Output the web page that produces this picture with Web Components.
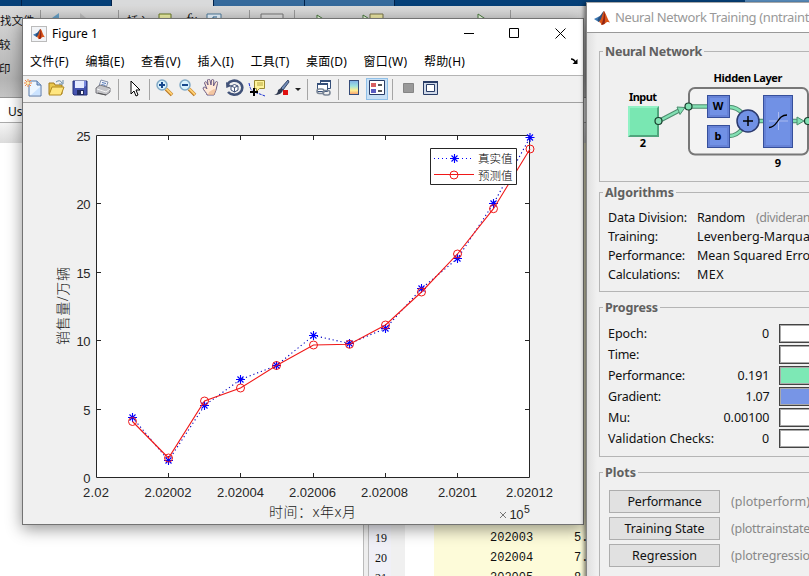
<!DOCTYPE html>
<html lang="zh"><head><meta charset="utf-8"><title>Figure 1</title>
<style>html,body{margin:0;width:809px;height:576px;overflow:hidden;background:#fff}</style></head>
<body><desk-top></desk-top>
<script>
const UI = '"Noto Sans","Noto Sans CJK SC",sans-serif';
function define(name, html, init) {
  const t = document.createElement('template');
  t.innerHTML = html;
  customElements.define(name, class extends HTMLElement {
    connectedCallback() {
      if (this.shadowRoot) return;
      this.attachShadow({mode: 'open'}).appendChild(t.content.cloneNode(true));
      if (init) init(this);
    }
  });
}

/* Label whose letter spacing is adjusted to fill the width in its w attribute */
define('fit-label', `<style>:host{display:inline-block;white-space:nowrap;flex:none}span{display:inline-block;white-space:pre}</style><span><slot></slot></span>`, el => {
  const w = +el.getAttribute('w'), s = el.shadowRoot.querySelector('span');
  const natural = s.getBoundingClientRect().width;
  if (w && natural) {
    s.style.letterSpacing = (w - natural) / el.textContent.length + 'px';
    el.style.width = w + 'px';
  }
});

define('matlab-logo', `<style>:host{display:block;flex:none}svg{display:block}</style>
<svg width="16" height="14" viewBox="0 0 16 14"><path d="M0 8 5 5.6 8 8 4.6 11z" fill="#3c79b4"/><path d="M5 5.6C7 5 8 1 10 0L8.7 8 4.6 11 3.5 9z" fill="#28507f"/><path d="M10 0c2 2 3.200 8 6 11.500-2-1-3.500-.8-5.500 1.500L7.500 14C7 12 6 11 4.600 11 7.500 9.500 8 3 10 0z" fill="#d95318"/><path d="M10 0c1.200 3 1.500 8 .5 13L7.500 14C9 10 10 5 10 0z" fill="#8e2413"/></svg>`);

const ICON = {
 new: '<path d="M5 3h8l4 4v11H5z" fill="#edf6ff" stroke="#5577a8"/><path d="M13 3v4h4" fill="#a9c5e8" stroke="#5577a8"/><path d="M7 17h9V9z" fill="#bcdcff" opacity=".7"/><path d="M4 1v8M0 5h8M1 2l6 6M7 2 1 8" stroke="#ef8844"/><circle cx="4" cy="5" r="1.500" fill="#fff3b0"/>',
 open: '<path d="M3 16V5h5l1 2h7v9z" fill="#eac84f" stroke="#a37b1c"/><path d="M3 17 6 9h12l-3 8z" fill="#ffe680" stroke="#b28a20"/><path d="M10 4q4-3 6 1m1-3v4h-4" fill="none" stroke="#668aa7"/>',
 save: '<path d="M3 3h14v14H4l-1-1z" fill="#4654b0" stroke="#26337d"/><path d="M5 3h9v7H5z" fill="#e6ebff"/><path d="M7 12h7v5H7z" fill="#202b5e"/><path d="M11 13h2v3h-2z" fill="#f6f6ff"/><path d="M14 3v6l2-1V3z" fill="#7b8ae0"/>',
 print: '<path d="M6 8 8 2l7 2-2 6z" fill="#f2f4fa" stroke="#8490aa"/><path d="m9 4.500 4 1m-4.500 1 4 1" stroke="#5277b7"/><path d="m3 10 4-3 10 3v4l-4 3-10-2z" fill="#c4c4c8" stroke="#77777d"/><path d="m4 11 9 3 4-3" fill="none" stroke="#f4f4f4"/><path d="m5 15 8 2" stroke="#555"/>',
 arrow: '<path d="M6 3v13l3-3 2 5 2-1-2-5h4z" fill="#fff" stroke="#000"/>',
 zin: '<path d="m11 11 6 6" stroke="#b87620" stroke-width="3.500"/><path d="m11 10.500 6 6" stroke="#ffcf72" stroke-width="2"/><circle cx="7" cy="7" r="5" fill="#d9f1fc" stroke="#80a9c6" stroke-width="1.500"/><path d="M4 7h6M7 4v6" stroke="#17488d" stroke-width="2"/>',
 zout: '<path d="m11 11 6 6" stroke="#b87620" stroke-width="3.500"/><path d="m11 10.500 6 6" stroke="#ffcf72" stroke-width="2"/><circle cx="7" cy="7" r="5" fill="#d9f1fc" stroke="#80a9c6" stroke-width="1.500"/><path d="M4 7h6" stroke="#17488d" stroke-width="2"/>',
 hand: '<path d="M6 17c0-2-4-5-4-7 1-2 3 0 4 1L3.500 5c.5-2 2-1.500 2.500 0l1 2-.5-5c1-1.500 2-1 2.500.3L10 7l.5-5c1-1.500 2.300-.5 2.300 1L12.500 8l2-4c1.500-1.200 2.400 0 2 1.500L15 12l-2 5z" fill="#ffe8d5" stroke="#6b5a83"/><path d="m7 17 1-3 5-3 2 1-2 5z" fill="#eeb88b" opacity=".7"/>',
 rot: '<path d="M3.500 6A8 7 0 1 1 4 14" fill="none" stroke="#415278" stroke-width="2.600"/><path d="m2 4 .3 6 5.200-2z" fill="#415278"/><path d="m7 8 3.500-1.500L14 8v4l-3.500 2L7 12zM7 8l3.500 1.500L14 8m-3.500 1.500V14" fill="#fff" stroke="#415278"/>',
 tip: '<path d="M7.500 2.500h10v8h-5l-3 3v-3h-2z" fill="#fff49b" stroke="#9a8a35"/><path d="M10 5h6m-6 2h6" stroke="#b6a643"/><path d="M2 5c1 5 2 8 5 9s6 2 11 4" fill="none" stroke="#1930d0" stroke-dasharray="3 1"/><path d="M7 10v8m-4-4h8" stroke="#000" stroke-width="2"/>',
 brush: '<path d="m17 2-7 8 2 2 6-8z" fill="#728db8" stroke="#354769"/><path d="m10 10 2 2q-1 5-9 5 4-1 4-5z" fill="#303a50"/><path d="M12 12h5v5h-5z" fill="#e01010"/>',
 link: '<path d="M7.500 2.500h10v8h-10z" fill="#f7faff" stroke="#344e78"/><path d="M7 3h11" stroke="#344e78" stroke-width="2"/><path d="M4.500 5.500h10v8h-10z" fill="#fff" stroke="#344e78"/><path d="M4 6h11" stroke="#344e78" stroke-width="2"/><g fill="none" stroke="#7b8797" stroke-width="1.600"><rect x="4" y="11" width="7" height="4.500" rx="2.200"/><rect x="10" y="12.500" width="7" height="4.500" rx="2.200"/></g>',
 bar: '<defs><linearGradient id="g" x2="0" y2="1"><stop stop-color="#7caee8"/><stop offset=".4" stop-color="#9ee3dd"/><stop offset=".7" stop-color="#ffef91"/><stop offset="1" stop-color="#f79b6c"/></linearGradient></defs><rect x="5.500" y="2.500" width="9" height="14" fill="url(#g)" stroke="#354b78"/>',
 leg: '<path d="M2.500 2.500h15v14h-15z" fill="#fff" stroke="#293d67"/><path d="M4 5h5v4H4z" fill="#d75f62"/><path d="M4 11h5v4H4z" fill="#5a5cc1"/><path d="M11 7h4m-4 6h4" stroke="#222" stroke-width="1.400"/>',
 grey: '<path d="M5.500 5.500h10v9h-10z" fill="#999" stroke="#858585"/>',
 dock: '<path d="M3.500 4.500h14v12h-14z" fill="#d1dae9" stroke="#293d67"/><path d="M3 4h15" stroke="#293d67" stroke-width="2"/><path d="M6.500 6.500h8v7h-8z" fill="#fff" stroke="#293d67"/>'
};
define('tool-icon', `<style>:host{display:block;flex:none;width:20px;height:20px}:host([on]){background:#c8e0f5;box-shadow:0 0 0 1px #90c0e8}svg{display:block}</style><svg width="20" height="20" viewBox="0 1 20 20"></svg>`,
 el => el.shadowRoot.querySelector('svg').innerHTML = ICON[el.getAttribute('k')]);

define('tool-bar', `<style>:host{display:flex;flex:none;align-items:center;background:#f0f0f0;border-top:1px solid #b4b4b4;border-bottom:1px solid #a0a0a0;box-sizing:border-box;height:28px}
i{width:1px;height:21px;background:#a5a5a5;flex:none}b{width:0;height:0;border:3px solid transparent;border-top-color:#222;border-bottom:0;margin:0 1px}</style>`, el => {
  const seq = 'new1 open2 save4 print3 |5 arrow6 |4 zin5 zout3 hand3 rot3 tip3 brush4 v3 |5 link5 |5 bar5 leg3 |5 grey5 dock2'.split(' ');
  for (const s of seq) {
    const k = s.slice(0, -1);
    const n = document.createElement(k === '|' ? 'i' : k === 'v' ? 'b' : 'tool-icon');
    if (k.length > 1) n.setAttribute('k', k);
    if (k === 'leg') n.setAttribute('on', '');
    n.style.marginLeft = (+s.slice(-1) + (k === 'v' ? 1 : 0)) + 'px';
    el.shadowRoot.appendChild(n);
  }
});

define('line-chart', `<style>:host{display:block;width:560px;height:421px;flex:none}svg{display:block}
text{font-family:"Liberation Sans","Noto Sans CJK SC",sans-serif;font-size:13px;fill:#262626}.c{font-family:"Noto Sans","Noto Sans CJK SC",sans-serif;fill:#222;font-weight:300;font-size:14px}.l{font-size:11.5px;fill:#000}</style>
<svg width="560" height="421" viewBox="23 103 560 421"></svg>`, el => {
  const xs = [132.5,168.5,204.5,240.5,276.5,313.5,349.5,385.5,421.5,457.5,493.5,530];
  const blue = [417.5,460.5,405.5,379.5,365.5,335.5,343.5,328.5,288.5,258.5,203.5,137.5];
  const red = [421.5,458,401,388,365.5,345,344.3,325,292,254,208.7,149];
  let o = '<path d="M96.5 135.5H529.5V477.5H96.5z" fill="#fff" stroke="#262626"/>';
  const t = (x, y, s, w, a = 'middle', c = '') => `<text class="${c}" x="${x}" y="${y}" text-anchor="${a}" textLength="${w}">${s}</text>`;
  [[96,'2.02',26],[168,'2.02002',47],[240.5,'2.02004',47],[312.5,'2.02006',47],[384.5,'2.02008',47],[457.5,'2.0201',39],[529.5,'2.02012',47]].forEach(([x,s,w], i) => {
    o += t(x, 497, s, w);
    const p = 96.5 + Math.round(i * 72.17);
    o += `<path d="M${p} 477v-4M${p} 136v4" stroke="#262626"/>`;
  });
  [0,5,10,15,20,25].forEach(v => {
    const p = Math.round(477 - v * 13.68) + .5;
    o += t(90.5, p + 5.5, v, v > 9 ? 14 : 7, 'end') + `<path d="M97 ${p}h4M529 ${p}h-4" stroke="#262626"/>`;
  });
  const pts = a => a.map((y, i) => xs[i] + ',' + y).join(' ');
  const star = (x, y) => `<path d="M${x-4.5} ${y}h9M${x} ${y-4.5}v9M${x-3} ${y-3}l6 6M${x+3} ${y-3}l-6 6" stroke="#00f" stroke-width="1.1"/>`;
  const ring = (x, y) => `<circle cx="${x}" cy="${y}" r="4" fill="none" stroke="#f01818"/>`;
  o += `<polyline points="${pts(blue)}" fill="none" stroke="#0000c0" stroke-width="1.1" stroke-dasharray="1.2 2.8"/>` + blue.map((y, i) => star(xs[i], y)).join('');
  o += `<polyline points="${pts(red)}" fill="none" stroke="#f01818" stroke-width="1.1"/>` + red.map((y, i) => ring(xs[i], y)).join('');
  o += '<path d="M430.5 148.5h86v36h-86z" fill="#fff" stroke="#262626"/><path d="M434 158.500h38" stroke="#00f" stroke-dasharray="1 3"/><path d="M434 174.500h40" stroke="#f01818"/>' + star(454.5, 158.5) + ring(454, 175);
  o += t(478, 163, '真实值', 34.5, 'start', 'c l') + t(478, 180, '预测值', 34.5, 'start', 'c l');
  o += t(269, 516.5, '时间：x年x月', 87, 'start', 'c') + `<g transform="translate(67.5 345) rotate(-90)">${t(0, 0, '销售量/万辆', 78, 'start', 'c')}</g>`;
  o += '<path d="m500 512 6 6m0-6-6 6" stroke="#555" stroke-width=".8"/>' + t(509.5, 519, '10', 14, 'start') + '<text x="524" y="513" style="font-size:10.5px">5</text>';
  el.shadowRoot.querySelector('svg').innerHTML = o;
});

define('figure-window', `<style>:host{display:flex;flex-direction:column;box-sizing:border-box;width:562px;height:507px;border:1px solid #737373;background:#f0f0f0;box-shadow:0 4px 15px rgba(0,0,0,.42);font:12px ${UI};color:#000}
header{display:flex;align-items:center;height:29px;background:#fff;padding-left:8px;flex:none}
.lg{width:14px;height:14px;border:1px solid #bbb;background:#f2f4f7;display:flex;align-items:center;justify-content:center;margin-right:5px;overflow:hidden}.lg matlab-logo{transform:scale(.75)}
.w{margin-left:auto;display:flex;margin-right:17px;gap:35px}.w svg{display:block}
nav{display:flex;align-items:center;background:#fff;height:27px;padding-left:7px;flex:none;line-height:18px}nav fit-label{margin-right:16.500px}nav svg{margin-left:auto;margin-right:4px}</style>
<header><div class="lg"><matlab-logo></matlab-logo></div><fit-label w="46">Figure 1</fit-label>
<div class="w"><svg width="11" height="11"><path d="M1 5.500h10" stroke="#000"/></svg><svg width="11" height="11"><path d="M.5.5h9v9H.5z" fill="none" stroke="#000"/></svg><svg width="11" height="11"><path d="m.5.500 10 10m0-10-10 10" stroke="#000"/></svg></div></header>
<nav><fit-label w="39">文件(F)</fit-label><fit-label w="39">编辑(E)</fit-label><fit-label w="40">查看(V)</fit-label><fit-label w="36.5">插入(I)</fit-label><fit-label w="39">工具(T)</fit-label><fit-label w="41">桌面(D)</fit-label><fit-label w="44">窗口(W)</fit-label><fit-label w="41">帮助(H)</fit-label><svg width="9" height="7"><path d="M1 1q3 0 5 4" fill="none" stroke="#000" stroke-width="1.500"/><path d="M7.500 1v5h-5z"/></svg></nav>
<tool-bar></tool-bar><line-chart></line-chart>`);

define('nn-group', `<style>:host{display:block;box-sizing:border-box;border:1px solid #b5b5b5;width:240px;flex:none}
.t{width:fit-content;height:17px;line-height:18px;margin:-9px 0 0 3px;padding:0 2px;background:#f0f0f0;color:#606060;font-weight:bold}</style><div class="t"><slot name="title"></slot></div><slot></slot>`);

define('nn-diagram', `<style>:host{display:block}svg{display:block}text{font:bold 11px "Noto Sans",sans-serif;text-anchor:middle;fill:#000}</style>
<svg width="209" height="120" viewBox="600 60 209 120">
<rect x="689" y="88" width="119" height="66.500" rx="6" fill="#f3f3f3" stroke="#777" stroke-width="2"/>
<g fill="none" stroke="#4e8d70" stroke-width="4.500"><path d="M659 121 681 109.500M690 106.500h18M729 107q8 0 14 7M729 136q8 0 14-8M758 121h6M792 121h6"/></g>
<g fill="none" stroke="#82e0b3" stroke-width="2.500"><path d="M659 121 681 109.500M690 106.500h18M729 107q8 0 14 7M729 136q8 0 14-8M758 121h6M792 121h6"/></g>
<path d="m677 107 8 .5-5 7z" fill="#82e0b3" stroke="#4e8d70"/><path d="m797 117 7 4-7 4z" fill="#82e0b3" stroke="#4e8d70"/>
<rect x="628" y="106" width="31" height="31" fill="#4fa57d"/><path d="M628 106h31l-3 3h-25v25l-3 3z" fill="#91f2c5"/><rect x="630" y="108" width="27" height="27" fill="#79e7b2"/>
<g stroke="#364f9b"><rect x="707.500" y="95.500" width="22" height="22" fill="#6682d6"/><rect x="707.500" y="125.500" width="22" height="22" fill="#6682d6"/><rect x="763.500" y="95.500" width="29" height="52" fill="#6682d6"/></g>
<g fill="#7191e5"><path d="M710 98h17v17h-17zM710 128h17v17h-17zM766 98h24v47h-24z"/></g>
<circle cx="748" cy="121" r="11" fill="#7191e5" stroke="#2c3a6d" stroke-width="1.500"/><path d="M743 121h10M748 116v10" stroke="#000" stroke-width="1.500"/>
<path d="M778.500 112v18M769 121h19" stroke="#a9baf0"/><path d="M769 127.500c9 0 8-12.500 18-12.500" fill="none" stroke="#000" stroke-width="1.300"/>
<g fill="#82e0b3" stroke="#173e2c" stroke-width="1.200"><circle cx="658.500" cy="121" r="3.500"/><circle cx="688.500" cy="106.500" r="3.500"/><circle cx="808" cy="121" r="3.500"/></g>
<text x="643" y="101" textLength="28">Input</text><text x="748" y="82" textLength="69">Hidden Layer</text><text x="643" y="147">2</text><text x="778" y="167">9</text><text x="718" y="110">W</text><text x="718" y="140">b</text></svg>`);

define('nn-bar', `<style>:host{display:block;box-sizing:border-box;width:60px;height:19px;border:1px solid #444;box-shadow:inset 1px 1px #aaa,inset 0 -1px #aaa;background:var(--c,#fff)}</style>`);
define('nn-button', `<style>:host{display:flex;justify-content:center;align-items:center;box-sizing:border-box;width:111px;height:23px;background:#e1e1e1;border:1px solid #adadad;flex:none}</style><slot></slot>`);

define('training-window', `<style>:host{display:block;width:240px;height:580px;border-left:1px solid #858585;border-top:1px solid #aaa;background:linear-gradient(90deg,#e0e0e0,#f0f0f0 10px);font:12.500px ${UI};color:#111;box-shadow:-2px 1px 4px rgba(0,0,0,.5)}
header{display:flex;align-items:center;height:29px;background:#fff;border-bottom:1px solid #999;color:#999;font-size:13px;padding-left:7px;gap:5px;line-height:16px}
header fit-label{margin-top:-2px}
main{display:flex;flex-direction:column;padding:18px 0 0 12px}
.r{display:flex;height:19px;align-items:center;padding-left:8px}.r>:first-child{margin-right:auto}.a .r{display:grid;grid-template-columns:89px auto;justify-content:start}.a .r>:first-child{margin:0}
.p .r{height:21px;padding-right:0;width:231px;box-sizing:border-box}.p .r nn-bar{margin-left:9.500px;width:52px}.g{color:#888}
.b{display:flex;align-items:center;gap:11px;padding-left:9px;margin-bottom:4px}</style>
<header><matlab-logo></matlab-logo><fit-label w="194">Neural Network Training (nntraint</fit-label></header>
<main>
<nn-group style="height:131px;margin-bottom:10px"><fit-label slot="title" w="97">Neural Network</fit-label><nn-diagram></nn-diagram></nn-group>
<nn-group style="height:100px;margin-bottom:15px"><fit-label slot="title" w="69">Algorithms</fit-label><div class="a" style="padding-top:7px">
<div class="r"><fit-label w="79">Data Division:</fit-label><div><fit-label w="48">Random</fit-label><fit-label class="g" w="54" style="margin-left:11px">(divideran</fit-label></div></div>
<div class="r"><fit-label w="50">Training:</fit-label><fit-label w="113">Levenberg-Marqua</fit-label></div>
<div class="r"><fit-label w="77">Performance:</fit-label><fit-label w="113">Mean Squared Erro</fit-label></div>
<div class="r"><fit-label w="72">Calculations:</fit-label><fit-label w="27">MEX</fit-label></div></div></nn-group>
<nn-group style="height:150px;margin-bottom:15px"><fit-label slot="title" w="53">Progress</fit-label><div class="p" style="padding-top:7px">
<div class="r"><fit-label w="39">Epoch:</fit-label><fit-label w="7.5">0</fit-label><nn-bar></nn-bar></div>
<div class="r"><fit-label w="31">Time:</fit-label><nn-bar></nn-bar></div>
<div class="r"><fit-label w="77">Performance:</fit-label><fit-label w="32">0.191</fit-label><nn-bar style="--c:#7de8b5"></nn-bar></div>
<div class="r"><fit-label w="53">Gradient:</fit-label><fit-label w="24">1.07</fit-label><nn-bar style="--c:#7795e6"></nn-bar></div>
<div class="r"><fit-label w="22">Mu:</fit-label><fit-label w="46">0.00100</fit-label><nn-bar></nn-bar></div>
<div class="r"><fit-label w="106">Validation Checks:</fit-label><fit-label w="7.5">0</fit-label><nn-bar></nn-bar></div></div></nn-group>
<nn-group style="height:130px"><fit-label slot="title" w="31">Plots</fit-label><div style="padding-top:9px">
<div class="b"><nn-button><fit-label w="74">Performance</fit-label></nn-button><fit-label class="g" w="79">(plotperform)</fit-label></div>
<div class="b"><nn-button><fit-label w="80">Training State</fit-label></nn-button><fit-label class="g" w="79">(plottrainstate</fit-label></div>
<div class="b"><nn-button><fit-label w="65">Regression</fit-label></nn-button><fit-label class="g" w="79">(plotregressio</fit-label></div></div></nn-group>
</main>`);

/* MATLAB desktop behind the two windows */
define('matlab-desktop', `<style>:host{display:flex;flex-direction:column;width:809px;height:576px;background:#fff;font:12px ${UI};color:#111}
.tabs{height:6px;flex:none;display:flex;background:#064078}.tabs i{border-right:1px solid #02224a}
.strip{height:92px;flex:none;background:linear-gradient(#dadada,#b4b4b4 80%,#c4c4c4);border-bottom:1px solid #969696;box-sizing:border-box}.strip svg{display:block}
.addr{height:24px;flex:none;background:#fff;border-bottom:1px solid #aaa;padding-left:8px;line-height:28px}
.hd{height:20px;flex:none;background:linear-gradient(#f5f5f5,#dcdcdc)}
.body{flex:1;display:flex;justify-content:flex-end}
.sheet{width:446px;display:grid;grid-template-columns:6px 22px 14px 29px 152px 1fr;background:#fff}
.sheet>div{padding-top:385px;line-height:20px;font-size:12px}.n{font-family:"Liberation Serif","Noto Sans CJK SC",serif}.y{background:#fdfbd9}.m{font-family:"Liberation Mono",monospace}</style>
<div class="tabs"><i style="width:21px"></i><i style="width:89px"></i><i style="width:101px;background:#d9dadb"></i><i style="width:90px;background:#366a9c"></i><i style="width:89px;background:#366a9c"></i><i style="width:64px;margin-left:auto;background:#5a8fc0;border:0"></i></div>
<div class="strip"><svg width="600" height="92" viewBox="0 6 600 92"><g fill="none" stroke="#999"><path d="M40.500 10v70M118.500 10v70M249.500 10v70M294.500 10v70M510.500 10v70"/></g><g font-family="Noto Sans CJK SC" font-size="11.500" fill="#111"><text x="0" y="25">找文件</text><text x="-1" y="49">较</text><text x="-1" y="73">印</text><text x="127" y="25">插入</text><text x="186" y="24" font-family="Liberation Serif" font-style="italic" font-size="15">fx</text></g><path d="m52 18 7-5v10z" fill="#66a0c6"/><path d="m80 13 6 5h-6z" fill="#bbb"/><path d="M159 14h12v10h-12z" fill="#eef0a7" stroke="#697825"/><path d="M207 14h14v10h-14z" fill="#e9f5ff" stroke="#4c7899"/><path d="M213 20v-3h4" fill="none" stroke="#26638d"/><path d="M261 14h22v10h-22z" fill="#ddd" stroke="#777"/><path d="m317 15 8 5h-8zM363 15l8 5h-8zM478 14l9 6h-9z" fill="#eefbe5" stroke="#48773c"/><path d="M370 14h13v10h-13z" fill="#eee9a6" stroke="#76734b"/></svg></div>
<div class="addr">Us</div><div class="hd"></div>
<div class="body"><div class="sheet"><div style="background:#eee;border-left:1px solid #bbb;border-right:1px solid #bbb"></div><div class="n" style="background:#f0f0f7;padding-left:6px">19<br>20<br>21</div><div style="background:#f0f0f0"></div><div></div><div class="y m" style="padding-left:56px">202003<br>202004<br>202005</div><div class="y m" style="margin-left:-12px">5.<br>7.<br>8.</div></div></div>`);

define('desk-top', `<style>:host{display:block;position:relative;width:809px;height:576px;overflow:hidden}
matlab-desktop,figure-window,training-window{position:absolute}matlab-desktop{left:0;top:0}figure-window{left:22px;top:18px}training-window{left:586px;top:2px}</style>
<matlab-desktop></matlab-desktop><figure-window></figure-window><training-window></training-window>`);
</script></body></html>
